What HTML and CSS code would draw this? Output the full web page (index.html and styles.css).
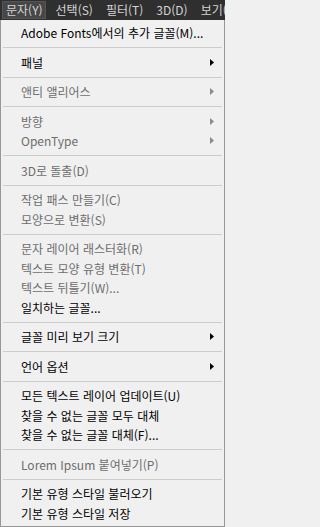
FILE: index.html
```html
<!DOCTYPE html>
<html lang="ko">
<head>
<meta charset="utf-8">
<title>문자 메뉴</title>
<link rel="stylesheet" href="styles.css">
</head>
<body>
<div class="menubar">
  <span class="mb-item active">문자(Y)</span>
  <span class="mb-item">선택(S)</span>
  <span class="mb-item">필터(T)</span>
  <span class="mb-item">3D(D)</span>
  <span class="mb-item">보기(V)</span>
</div>
<div class="menu">
  <div class="row">Adobe Fonts에서의 추가 글꼴(M)...</div>
  <div class="sep"></div>
  <div class="row sub">패널<svg class="arrow" viewBox="0 0 4 7"><polygon points="0,0 4,3.5 0,7"/></svg></div>
  <div class="sep"></div>
  <div class="row sub off">앤티 앨리어스<svg class="arrow" viewBox="0 0 4 7"><polygon points="0,0 4,3.5 0,7"/></svg></div>
  <div class="sep"></div>
  <div class="row sub off">방향<svg class="arrow" viewBox="0 0 4 7"><polygon points="0,0 4,3.5 0,7"/></svg></div>
  <div class="row sub off">OpenType<svg class="arrow" viewBox="0 0 4 7"><polygon points="0,0 4,3.5 0,7"/></svg></div>
  <div class="sep"></div>
  <div class="row off">3D로 돌출(D)</div>
  <div class="sep"></div>
  <div class="row off">작업 패스 만들기(C)</div>
  <div class="row off">모양으로 변환(S)</div>
  <div class="sep"></div>
  <div class="row off">문자 레이어 래스터화(R)</div>
  <div class="row off">텍스트 모양 유형 변환(T)</div>
  <div class="row off">텍스트 뒤틀기(W)...</div>
  <div class="row">일치하는 글꼴...</div>
  <div class="sep"></div>
  <div class="row sub">글꼴 미리 보기 크기<svg class="arrow" viewBox="0 0 4 7"><polygon points="0,0 4,3.5 0,7"/></svg></div>
  <div class="sep"></div>
  <div class="row sub">언어 옵션<svg class="arrow" viewBox="0 0 4 7"><polygon points="0,0 4,3.5 0,7"/></svg></div>
  <div class="sep"></div>
  <div class="row">모든 텍스트 레이어 업데이트(U)</div>
  <div class="row">찾을 수 없는 글꼴 모두 대체</div>
  <div class="row">찾을 수 없는 글꼴 대체(F)...</div>
  <div class="sep"></div>
  <div class="row off">Lorem Ipsum 붙여넣기(P)</div>
  <div class="sep"></div>
  <div class="row">기본 유형 스타일 불러오기</div>
  <div class="row">기본 유형 스타일 저장</div>
</div>
</body>
</html>
```

FILE: styles.css
```css
html, body {
  margin: 0;
  padding: 0;
  background: #f0f0f0;
}
body {
  width: 225px;
  height: 527px;
  overflow: hidden;
  font-family: "Noto Sans CJK KR", "Noto Sans", sans-serif;
  font-size: 12px;
}
.menubar {
  height: 20px;
  background: #2f2f2f;
  display: flex;
  align-items: stretch;
  padding: 1px 0 1px 2px;
  box-sizing: border-box;
  white-space: nowrap;
  overflow: hidden;
  gap: 6px;
}
.mb-item {
  color: #d4d4d4;
  line-height: 18px;
  padding: 0 2px 0 3px;
  box-sizing: border-box;
  border: 1px solid transparent;
  display: flex;
  align-items: center;
}
.mb-item.active {
  background: #474747;
  border-color: #555555;
}
.menu {
  background: #f0f0f0;
  border: 1px solid #979797;
  border-top: none;
  padding: 3px 0 2px;
  height: 507px;
  box-sizing: border-box;
}
.row {
  height: 19.5px;
  line-height: 19.5px;
  padding-left: 20px;
  color: #000000;
  white-space: nowrap;
  display: flex;
  align-items: center;
  position: relative;
}
.row.off {
  color: #6d6d6d;
}
.arrow {
  width: 4px;
  height: 7px;
  margin-left: auto;
  margin-right: 10px;
  fill: #000000;
}
.row.off .arrow {
  fill: #8a8a8a;
}
.sep {
  height: 1px;
  background: #cccccc;
  margin: 4.5px 2px 4.5px 2px;
}
```
